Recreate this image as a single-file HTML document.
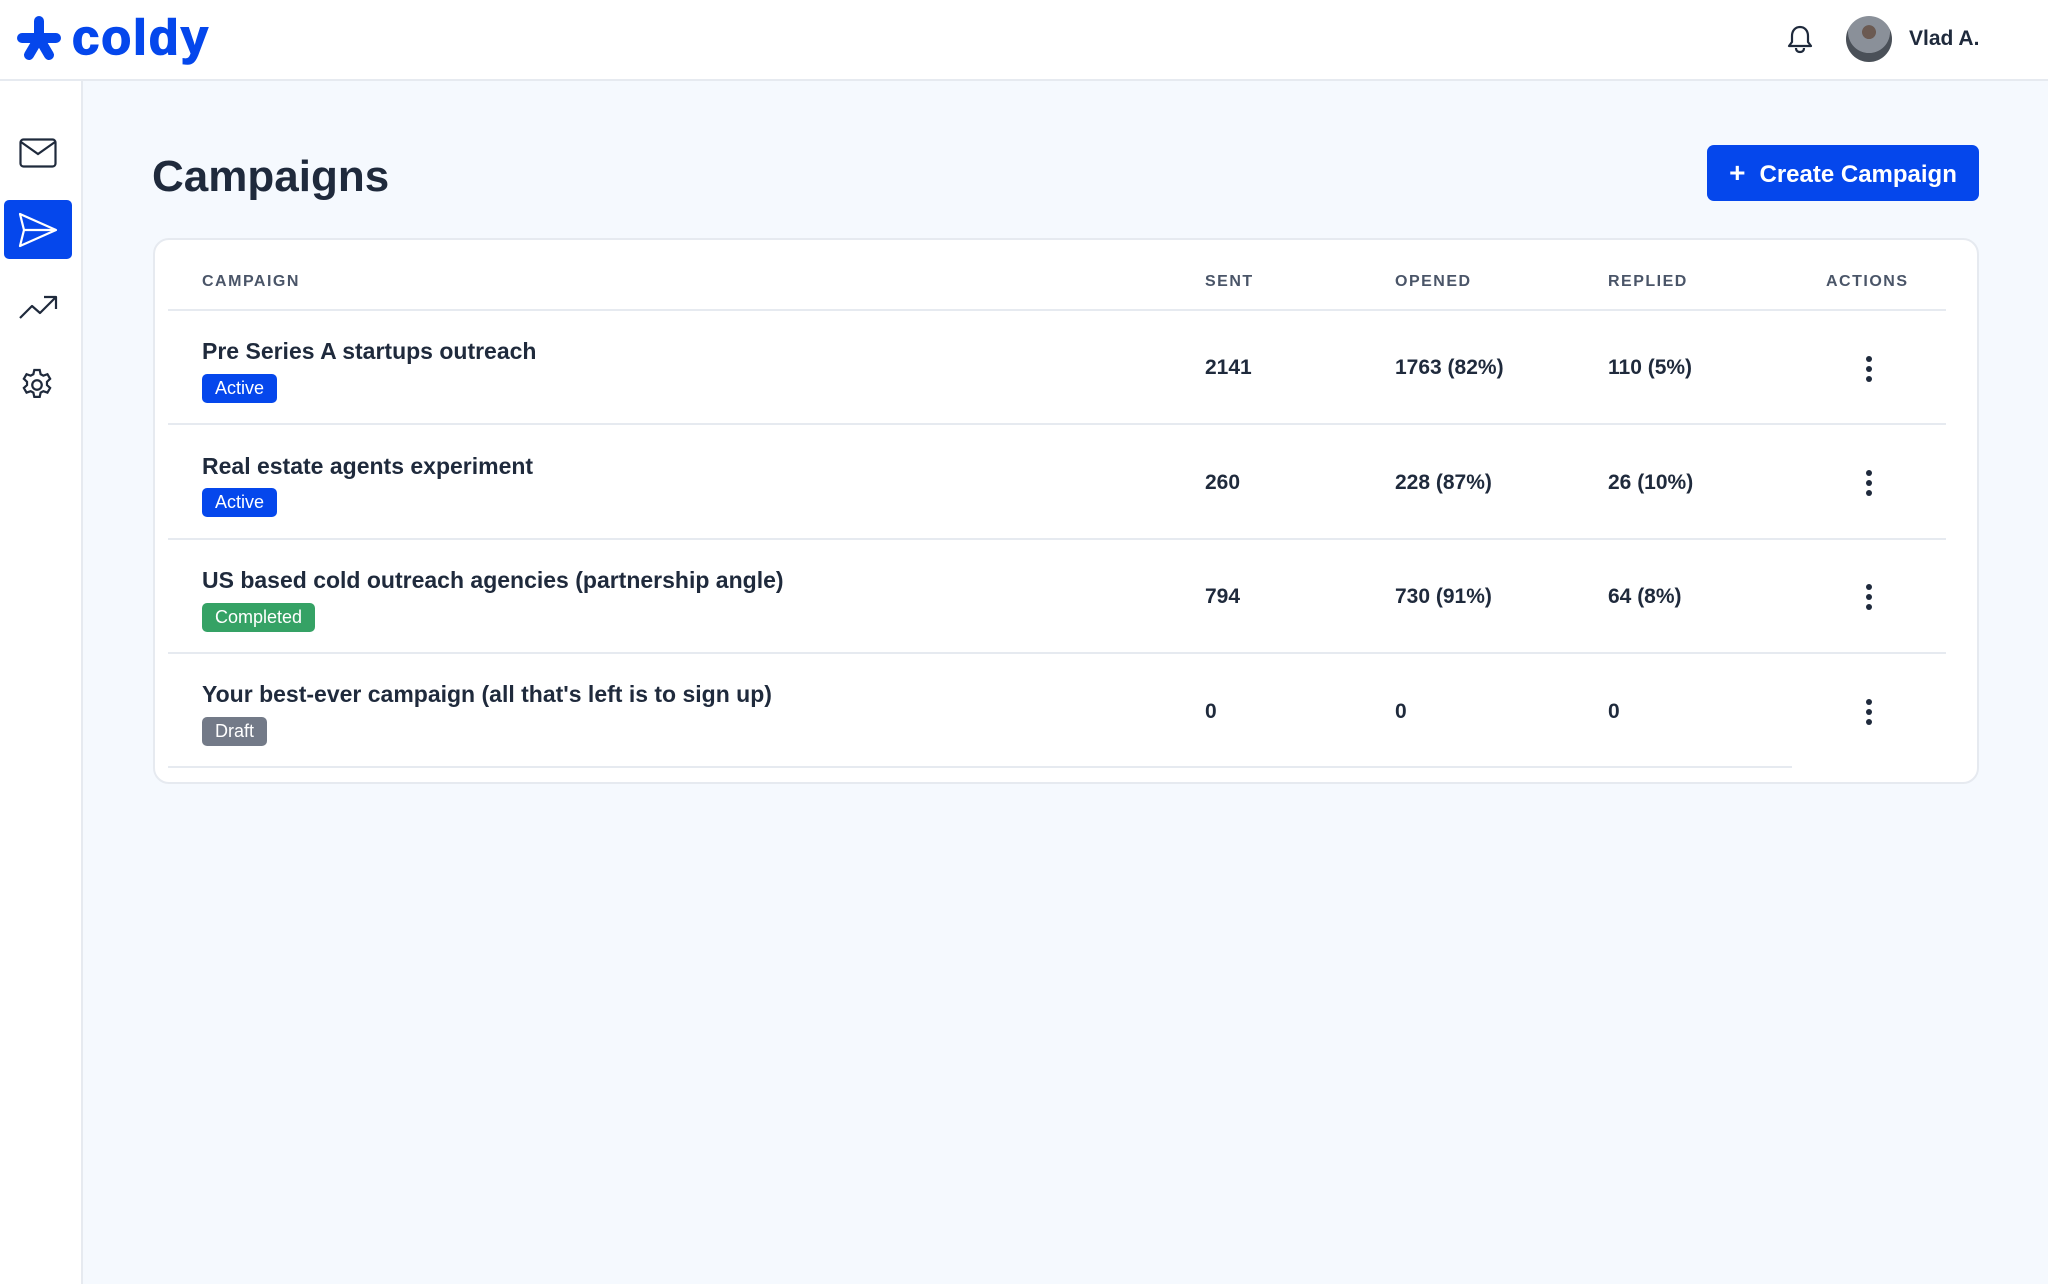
<!DOCTYPE html>
<html><head><meta charset="utf-8"><style>
*{margin:0;padding:0;box-sizing:border-box}
body{width:2048px;height:1284px;background:#f5f9fe;font-family:"Liberation Sans",sans-serif;color:#1f2a3c;position:relative;overflow:hidden}
.hdr{position:absolute;left:0;top:0;width:2048px;height:81px;background:#fff;border-bottom:2px solid #e6eaf0}
.side{position:absolute;left:0;top:81px;width:83px;height:1203px;background:#fff;border-right:2px solid #e6eaf0}
.abs{position:absolute}
.logo{position:absolute;left:72px;top:10px;font-size:49px;font-weight:bold;color:#0547ec;letter-spacing:2px;-webkit-text-stroke:1.5px #0547ec}
.title{left:152px;top:152px;font-size:44px;font-weight:bold;color:#1f2a3c}
.btn{left:1707px;top:145px;width:272px;height:56px;background:#0547ec;border-radius:7px;color:#fff;font-size:24px;font-weight:bold;line-height:56px;text-align:center}
.card{left:153px;top:238px;width:1826px;height:546px;background:#fff;border:2px solid #e6eaf0;border-radius:16px}
.th{font-size:16px;font-weight:bold;color:#4a5568;letter-spacing:1.5px;top:273px}
.line{height:2px;background:#e6eaf0}
.rt{font-size:23px;font-weight:bold;color:#1f2a3c}
.num{font-size:21px;font-weight:bold;color:#1f2a3c}
.badge{height:29px;line-height:29px;border-radius:5px;color:#fff;font-size:18px;padding:0 13px}
.dots{width:6px}
.dots i{display:block;width:6px;height:6px;border-radius:3px;background:#1f2a3c;margin-bottom:4px}
</style></head><body>
<div class="hdr"></div>
<svg class="abs" style="left:14px;top:14px" width="52" height="50" viewBox="0 0 52 50">
<g stroke="#0547ec" stroke-width="10" stroke-linecap="round" fill="none">
<line x1="25" y1="7" x2="25" y2="24"/><line x1="8" y1="24" x2="42" y2="24"/>
<line x1="25" y1="24" x2="15" y2="41"/><line x1="25" y1="24" x2="35" y2="41"/>
</g></svg>
<div class="logo">coldy</div>
<svg class="abs" style="left:1786px;top:24px" width="28" height="30" viewBox="0 0 28 30" fill="none" stroke="#1f2a3c" stroke-width="2.2" stroke-linejoin="round">
<path d="M14 3c-5 0-8 4-8 9v6l-3 4h22l-3-4v-6c0-5-3-9-8-9z"/><path d="M10 24c0 3 2 4 4 4s4-1 4-4"/></svg>
<div class="abs" style="left:1846px;top:16px;width:46px;height:46px;border-radius:50%;background:radial-gradient(circle at 50% 35%,#6b5a52 0 18%,#8a9099 19% 55%,#4a5058 56%)"></div>
<div class="abs" style="left:1909px;top:27px;font-size:21px;font-weight:bold;color:#1f2a3c">Vlad A.</div>
<div class="side"></div>
<svg class="abs" style="left:19px;top:138px" width="38" height="30" viewBox="0 0 38 30" fill="none" stroke="#1f2a3c" stroke-width="2.2"><rect x="1.5" y="1.5" width="35" height="27" rx="3"/><path d="M2 4l17 12 17-12"/></svg>
<div class="abs" style="left:4px;top:200px;width:68px;height:59px;background:#0547ec;border-radius:5px"></div>
<svg class="abs" style="left:18px;top:212px" width="40" height="36" viewBox="0 0 40 36" fill="none" stroke="#fff" stroke-width="2.2" stroke-linejoin="round"><path d="M2 2l36 16L2 34l4-16z"/><path d="M6 18h32"/></svg>
<svg class="abs" style="left:18px;top:294px" width="40" height="26" viewBox="0 0 40 26" fill="none" stroke="#1f2a3c" stroke-width="2.2" stroke-linejoin="round"><path d="M2 24l12-12 8 7 16-16"/><path d="M26 3h12v12"/></svg>
<svg class="abs" style="left:18px;top:366px" width="38" height="38" viewBox="0 0 24 24" fill="none" stroke="#1f2a3c" stroke-width="1.4"><path d="M10.3 2.5h3.4l.6 2.7 1.7.9 2.6-.9 1.7 2.9-2 1.9v2l2 1.9-1.7 2.9-2.6-.9-1.7.9-.6 2.7h-3.4l-.6-2.7-1.7-.9-2.6.9-1.7-2.9 2-1.9v-2l-2-1.9 1.7-2.9 2.6.9 1.7-.9z"/><circle cx="12" cy="12" r="3"/></svg>
<div class="abs title">Campaigns</div>
<div class="abs btn"><span style="font-size:28px;margin-right:14px">+</span>Create Campaign</div>
<div class="abs card"></div>
<div class="abs th" style="left:202px">CAMPAIGN</div>
<div class="abs th" style="left:1205px">SENT</div>
<div class="abs th" style="left:1395px">OPENED</div>
<div class="abs th" style="left:1608px">REPLIED</div>
<div class="abs th" style="left:1826px">ACTIONS</div>
<div class="abs line" style="left:168px;top:309px;width:1778px"></div>

<div class="abs rt" style="left:202px;top:338px">Pre Series A startups outreach</div>
<div class="abs badge" style="left:202px;top:374px;background:#0547ec">Active</div>
<div class="abs num" style="left:1205px;top:356px">2141</div><div class="abs num" style="left:1395px;top:356px">1763 (82%)</div><div class="abs num" style="left:1608px;top:356px">110 (5%)</div>
<div class="abs dots" style="left:1866px;top:356px"><i></i><i></i><i></i></div>
<div class="abs line" style="left:168px;top:423px;width:1778px"></div>

<div class="abs rt" style="left:202px;top:453px">Real estate agents experiment</div>
<div class="abs badge" style="left:202px;top:488px;background:#0547ec">Active</div>
<div class="abs num" style="left:1205px;top:471px">260</div><div class="abs num" style="left:1395px;top:471px">228 (87%)</div><div class="abs num" style="left:1608px;top:471px">26 (10%)</div>
<div class="abs dots" style="left:1866px;top:470px"><i></i><i></i><i></i></div>
<div class="abs line" style="left:168px;top:538px;width:1778px"></div>

<div class="abs rt" style="left:202px;top:567px">US based cold outreach agencies (partnership angle)</div>
<div class="abs badge" style="left:202px;top:603px;background:#35a265">Completed</div>
<div class="abs num" style="left:1205px;top:585px">794</div><div class="abs num" style="left:1395px;top:585px">730 (91%)</div><div class="abs num" style="left:1608px;top:585px">64 (8%)</div>
<div class="abs dots" style="left:1866px;top:584px"><i></i><i></i><i></i></div>
<div class="abs line" style="left:168px;top:652px;width:1778px"></div>

<div class="abs rt" style="left:202px;top:681px">Your best-ever campaign (all that's left is to sign up)</div>
<div class="abs badge" style="left:202px;top:717px;background:#737a88">Draft</div>
<div class="abs num" style="left:1205px;top:700px">0</div><div class="abs num" style="left:1395px;top:700px">0</div><div class="abs num" style="left:1608px;top:700px">0</div>
<div class="abs dots" style="left:1866px;top:699px"><i></i><i></i><i></i></div>
<div class="abs line" style="left:168px;top:766px;width:1624px"></div>
</body></html>
